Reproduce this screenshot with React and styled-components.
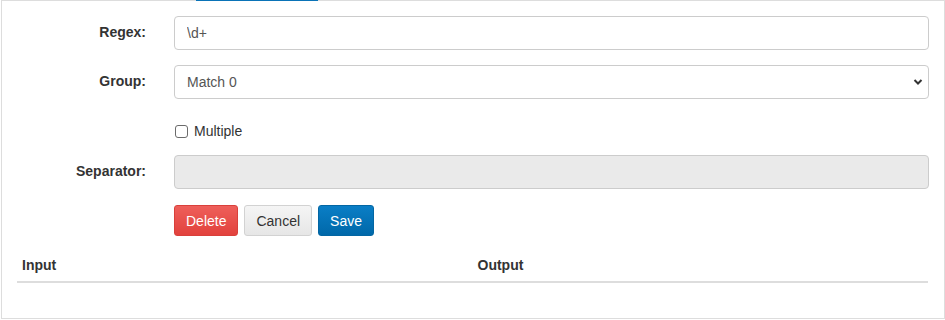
import React from 'react';
import styled, { createGlobalStyle, css } from 'styled-components';

const GlobalStyle = createGlobalStyle`
  html, body {
    margin: 0;
    background: #fff;
  }
  body {
    font-family: "Liberation Sans", Arial, Helvetica, sans-serif;
    font-size: 14px;
    line-height: 1.42857;
    color: #333;
  }
  * {
    box-sizing: border-box;
  }
`;

const Page = styled.div`
  width: 944px;
  margin-left: 1px;
`;

const TabStrip = styled.div`
  display: flex;
  height: 1px;
`;

const TabSegment = styled.div`
  background: ${({ $active }) => ($active ? '#0a73b7' : '#ddd')};
  flex: ${({ $width }) => ($width ? `0 0 ${$width}px` : '1')};
`;

const Panel = styled.div`
  border: 1px solid #ddd;
  border-top: none;
  padding: 15px 15px 15px 14px;
`;

const Form = styled.div`
  display: grid;
  grid-template-columns: 130px 1fr;
  column-gap: 28px;
  row-gap: 15px;
  align-items: center;
`;

const Label = styled.label`
  text-align: right;
  font-weight: bold;
  color: #333;
`;

const fieldBase = css`
  width: 100%;
  height: 34px;
  padding: 6px 12px;
  font-family: inherit;
  font-size: 14px;
  color: #555;
  background: #fff;
  border: 1px solid #ccc;
  border-radius: 4px;
  outline: none;
`;

const TextInput = styled.input`
  ${fieldBase}
  &:disabled {
    background: #eaeaea;
  }
`;

const SelectWrap = styled.div`
  position: relative;
`;

const Select = styled.select`
  ${fieldBase}
  appearance: none;
  -webkit-appearance: none;
`;

const Chevron = styled.svg`
  position: absolute;
  right: 6px;
  top: 13px;
  pointer-events: none;
`;

const CheckRow = styled.label`
  grid-column: 2;
  display: flex;
  align-items: center;
  gap: 6px;
  height: 26px;
  padding-top: 9px;
  color: #333;
`;

const CheckBox = styled.span`
  width: 13px;
  height: 13px;
  margin-left: 1px;
  border: 1px solid #6b6b6b;
  border-radius: 3px;
  background: #fff;
`;

const Buttons = styled.div`
  grid-column: 2;
  display: flex;
  gap: 6px;
  padding-top: 1px;
`;

const variants = {
  danger: css`
    color: #fff;
    background: linear-gradient(#ee5f5a, #e2423d);
    border-color: #d9403b;
  `,
  default: css`
    color: #333;
    background: linear-gradient(#f5f5f5, #e6e6e6);
    border-color: #d2d2d2;
  `,
  primary: css`
    color: #fff;
    background: linear-gradient(#0a7ec6, #0068a9);
    border-color: #0366a3;
  `,
};

const Button = styled.button`
  height: 31px;
  padding: 0 11px;
  font-family: inherit;
  font-size: 14px;
  border: 1px solid;
  border-radius: 3px;
  cursor: pointer;
  ${({ $variant }) => variants[$variant]}
`;

const Table = styled.table`
  width: 911px;
  margin: 11px 1px 20px 1px;
  border-collapse: collapse;
`;

const Th = styled.th`
  width: 50%;
  text-align: left;
  padding: 9px 5px 5px;
  font-weight: bold;
  color: #333;
  border-bottom: 2px solid #ddd;
`;

const App = () => (
  <Page>
    <GlobalStyle />
    <TabStrip>
      <TabSegment $width={195} />
      <TabSegment $width={122} $active />
      <TabSegment />
    </TabStrip>
    <Panel>
      <Form>
        <Label>Regex:</Label>
        <TextInput defaultValue="\d+" />

        <Label>Group:</Label>
        <SelectWrap>
          <Select defaultValue="0">
            <option value="0">Match 0</option>
          </Select>
          <Chevron width="10" height="8" viewBox="0 0 10 8">
            <path d="M1.5 2 L5 5.5 L8.5 2" fill="none" stroke="#333" strokeWidth="2" />
          </Chevron>
        </SelectWrap>

        <CheckRow>
          <CheckBox />
          Multiple
        </CheckRow>

        <Label>Separator:</Label>
        <TextInput disabled />

        <Buttons>
          <Button $variant="danger">Delete</Button>
          <Button $variant="default">Cancel</Button>
          <Button $variant="primary">Save</Button>
        </Buttons>
      </Form>
      <Table>
        <thead>
          <tr>
            <Th>Input</Th>
            <Th>Output</Th>
          </tr>
        </thead>
      </Table>
    </Panel>
  </Page>
);

export default App;
